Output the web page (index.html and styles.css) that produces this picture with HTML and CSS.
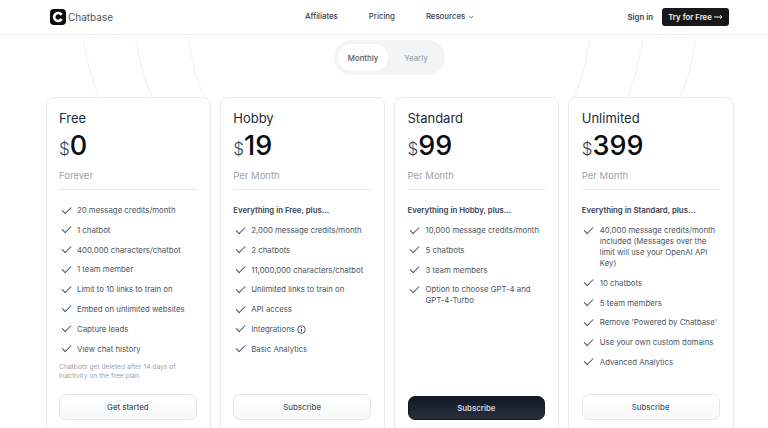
FILE: index.html
```html
<!DOCTYPE html>
<html lang="en">
<head>
<meta charset="utf-8">
<title>Chatbase Pricing</title>
<link rel="stylesheet" href="styles.css">
</head>
<body>
<header class="nav">
  <a class="brand"><span class="logo"><svg viewBox="0 0 16 16" width="16" height="16"><rect width="16" height="16" rx="4" fill="#0a0a0a"/><path d="M11.6 6A4 4 0 1 0 11.6 10" fill="none" stroke="#fff" stroke-width="2.6"/></svg></span><span class="brand-name">Chatbase</span></a>
  <nav class="links"><a>Affiliates</a><a>Pricing</a><a>Resources <svg class="chev" viewBox="0 0 8 8" width="6" height="6"><path d="M1 2.5 4 5.5 7 2.5" fill="none" stroke="#555" stroke-width="1"/></svg></a></nav>
  <div class="actions"><a class="signin">Sign in</a><a class="try">Try for Free <svg class="arrow" viewBox="0 0 9 6" width="9" height="6"><path d="M0 3H8M6.2 1.2 8 3 6.2 4.8" fill="none" stroke="#f3f4f6" stroke-width="1"/></svg></a></div>
</header>
<main class="main">
  <svg class="arcs" viewBox="0 0 768 428" width="768" height="428">
    <g fill="none" stroke="#f1f2f4" stroke-width="1">
      <path d="M83 35C86 60 92 80 99 97"/><path d="M135 35C139 60 145 80 152 97"/><path d="M188 35C192 60 195 80 205 97"/>
      <path d="M590 35C587 60 581 80 575 97"/><path d="M643 35C640 60 634 80 628 97"/><path d="M696 35C693 60 688 80 680 97"/>
    </g>
  </svg>
  <div class="toggle"><span class="tab active">Monthly</span><span class="tab">Yearly</span></div>
  <section class="plans">
    <article class="card">
      <h2>Free</h2>
      <div class="price"><span class="cur">$</span><span class="amt">0</span></div>
      <div class="period">Forever</div>
      <ul class="feats first">
        <li>20 message credits/month</li><li>1 chatbot</li><li>400,000 characters/chatbot</li><li>1 team member</li><li>Limit to 10 links to train on</li><li>Embed on unlimited websites</li><li>Capture leads</li><li>View chat history</li>
      </ul>
      <p class="note">Chatbots get deleted after 14 days of inactivity on the free plan.</p>
      <a class="btn">Get started</a>
    </article>
    <article class="card">
      <h2>Hobby</h2>
      <div class="price"><span class="cur">$</span><span class="amt">19</span></div>
      <div class="period">Per Month</div>
      <p class="plus">Everything in Free, plus...</p>
      <ul class="feats">
        <li>2,000 message credits/month</li><li>2 chatbots</li><li>11,000,000 characters/chatbot</li><li>Unlimited links to train on</li><li>API access</li><li>Integrations <svg class="info" viewBox="0 0 10 10" width="9" height="9"><circle cx="5" cy="5" r="4.2" fill="none" stroke="#444" stroke-width="1"/><path d="M5 4.4V7.4M5 2.6V3.5" stroke="#444" stroke-width="1.1"/></svg></li><li>Basic Analytics</li>
      </ul>
      <a class="btn">Subscribe</a>
    </article>
    <article class="card">
      <h2>Standard</h2>
      <div class="price"><span class="cur">$</span><span class="amt">99</span></div>
      <div class="period">Per Month</div>
      <p class="plus">Everything in Hobby, plus...</p>
      <ul class="feats">
        <li>10,000 message credits/month</li><li>5 chatbots</li><li>3 team members</li><li>Option to choose GPT-4 and GPT-4-Turbo</li>
      </ul>
      <a class="btn dark">Subscribe</a>
    </article>
    <article class="card">
      <h2>Unlimited</h2>
      <div class="price"><span class="cur">$</span><span class="amt">399</span></div>
      <div class="period">Per Month</div>
      <p class="plus">Everything in Standard, plus...</p>
      <ul class="feats">
        <li>40,000 message credits/month included (Messages over the limit will use your OpenAI API Key)</li><li>10 chatbots</li><li>5 team members</li><li>Remove 'Powered by Chatbase'</li><li>Use your own custom domains</li><li>Advanced Analytics</li>
      </ul>
      <a class="btn">Subscribe</a>
    </article>
  </section>
</main>
</body>
</html>
```
FILE: styles.css
```css
* { box-sizing: border-box; }
html, body { margin: 0; height: 428px; overflow: hidden; background: #fff; }
body { font-family: Inter, "Liberation Sans", sans-serif; color: #111827; }
.nav { height: 35px; display: flex; align-items: center; padding: 0 39px 0 50px; border-bottom: 1px solid #eeeff1; position: relative; }
.brand { display: flex; align-items: center; gap: 2px; width: 255px; }
.logo { display: flex; }
.brand-name { font-size: 10px; color: #4b5563; }
.links { display: flex; gap: 31px; font-size: 7.8px; font-weight: 500; color: #374151; margin-top: -3px; }
.chev { margin-left: 1px; vertical-align: -1px; }
.actions { margin-left: auto; display: flex; align-items: center; gap: 9px; font-size: 7.8px; font-weight: 600; }
.signin { color: #374151; }
.try { background: #18181b; color: #f3f4f6; border-radius: 3px; height: 18px; width: 67px; display: flex; align-items: center; justify-content: center; gap: 2px; }
.main { position: relative; height: 393px; padding-left: 11px; display: flex; flex-direction: column; align-items: center; }
.arcs { position: absolute; left: 0; top: -35px; pointer-events: none; }
.toggle { position: relative; flex: none; margin-top: 5px; width: 111px; height: 35px; border-radius: 18px; background: #f3f4f6; padding: 4px; display: flex; }
.tab { width: 52px; display: flex; align-items: center; justify-content: center; font-size: 7.8px; font-weight: 500; color: #9ca3af; }
.tab.active { background: #fff; color: #4b5563; border-radius: 14px; }
.tab + .tab { padding-left: 3px; width: 55px; }
.plans { position: relative; flex: none; margin-top: 22px; display: grid; grid-template-columns: repeat(4, 165.25px); gap: 9px; width: 688px; }
.card { height: 340px; background: #fff; border: 1px solid #e9ebee; border-radius: 8px; padding: 12px 13px 16px 12.5px; display: flex; flex-direction: column; }
h2 { margin: 0; font-size: 13px; line-height: 16px; font-weight: 400; color: #1f2937; }
.price { margin-top: 5px; height: 29px; display: flex; align-items: baseline; line-height: 29px; }
.cur { font-size: 17px; font-weight: 300; color: #374151; }
.amt { font-size: 27px; font-weight: 500; color: #0b0b10; }
.period { margin-top: 9px; padding-bottom: 7px; font-size: 9.5px; line-height: 13px; color: #9ca3af; border-bottom: 1px solid #e5e7eb; }
.plus { margin: 15px 0 0; font-size: 7.8px; line-height: 11px; font-weight: 600; color: #374151; }
.feats { list-style: none; margin: 9px 0 0; padding: 0 0 0 18px; display: flex; flex-direction: column; gap: 8.8px; font-size: 7.8px; line-height: 11px; color: #4b5563; }
.feats.first { margin-top: 15px; }
.feats li { position: relative; }
.feats li::before { content: ""; position: absolute; left: -15.5px; top: 1.5px; width: 7.5px; height: 3.5px; border-left: 1px solid #4b5563; border-bottom: 1px solid #4b5563; transform: rotate(-45deg); }
.info { vertical-align: -2px; }
.note { margin: 8px 0 0; font-size: 6.7px; line-height: 9px; color: #9ca3af; }
.btn { margin-top: auto; flex: none; height: 26px; display: flex; align-items: center; justify-content: center; border: 1px solid #e5e7eb; border-radius: 7px; background: linear-gradient(#fff, #f7f8fa); font-size: 7.8px; font-weight: 500; color: #4b5563; }
.btn.dark { background: linear-gradient(#111827, #2a2f3c); color: #d1d5db; border-color: #111827; font-weight: 600; height: 24px; }
```
